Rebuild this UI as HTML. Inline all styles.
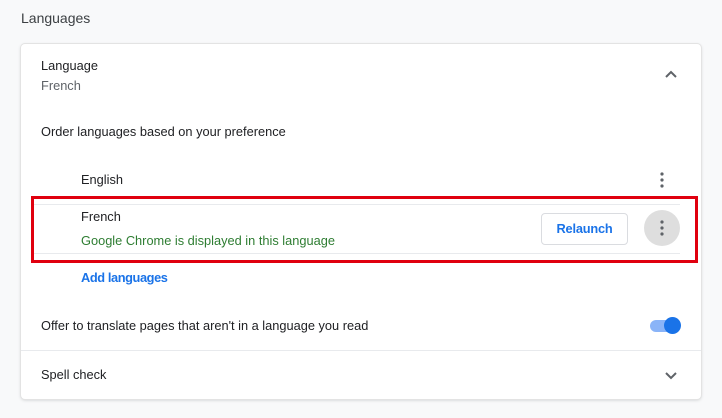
<!DOCTYPE html>
<html><head><style>
body{margin:0;width:722px;height:418px;background:#f8f9fa;font-family:"Liberation Sans",Arial,sans-serif;font-size:12.8px;color:#202124;position:relative;overflow:hidden}
.a{position:absolute;white-space:nowrap}
.card{position:absolute;left:21px;top:44px;width:680px;height:355px;background:#fff;border-radius:4px;box-shadow:0 0 0 1px #e3e3e3,0 1px 3px rgba(60,64,67,.25)}
.hr{position:absolute;height:1px;background:#e8eaed}
</style></head><body>
<div class="a" style="left:21px;top:10px;font-size:14px;color:#3c4043">Languages</div>
<div class="card"></div>
<div class="a" style="left:41px;top:58px">Language</div>
<div class="a" style="left:41px;top:78px;color:#5f6368">French</div>
<svg class="a" style="left:664px;top:70px" width="14" height="10"><path d="M2 7 L7 2 L12 7" stroke="#5f6368" stroke-width="2" fill="none"/></svg>
<div class="a" style="left:41px;top:124px">Order languages based on your preference</div>
<div class="a" style="left:81px;top:172px">English</div>
<svg class="a" style="left:658px;top:171px" width="8" height="18"><circle cx="4" cy="3" r="1.6" fill="#5f6368"/><circle cx="4" cy="9" r="1.6" fill="#5f6368"/><circle cx="4" cy="15" r="1.6" fill="#5f6368"/></svg>
<div class="hr" style="left:34px;top:204px;width:646px"></div>
<div class="hr" style="left:34px;top:253px;width:646px"></div>
<div class="a" style="left:31px;top:196px;width:661px;height:61px;border:3px solid #e0000f"></div>
<div class="a" style="left:81px;top:209px">French</div>
<div class="a" style="left:81px;top:233px;color:#2e7d32">Google Chrome is displayed in this language</div>
<div class="a" style="left:541px;top:213px;width:85px;height:30px;border:1px solid #dadce0;border-radius:4px;color:#1a73e8;font-weight:bold;letter-spacing:-0.2px;text-align:center;line-height:30px">Relaunch</div>
<div class="a" style="left:644px;top:210px;width:36px;height:36px;border-radius:50%;background:#dedede"></div>
<svg class="a" style="left:658px;top:219px" width="8" height="18"><circle cx="4" cy="3" r="1.6" fill="#5f6368"/><circle cx="4" cy="9" r="1.6" fill="#5f6368"/><circle cx="4" cy="15" r="1.6" fill="#5f6368"/></svg>
<div class="a" style="left:81px;top:270px;color:#1a73e8;font-weight:bold;letter-spacing:-0.4px">Add languages</div>
<div class="a" style="left:41px;top:318px">Offer to translate pages that aren't in a language you read</div>
<div class="a" style="left:650px;top:320px;width:28px;height:12px;border-radius:6px;background:#8ab4f8"></div>
<div class="a" style="left:664px;top:317px;width:17px;height:17px;border-radius:50%;background:#1a73e8"></div>
<div class="hr" style="left:21px;top:350px;width:680px"></div>
<div class="a" style="left:41px;top:367px">Spell check</div>
<svg class="a" style="left:664px;top:370px" width="14" height="10"><path d="M2 3 L7 8 L12 3" stroke="#5f6368" stroke-width="2" fill="none"/></svg>
</body></html>
